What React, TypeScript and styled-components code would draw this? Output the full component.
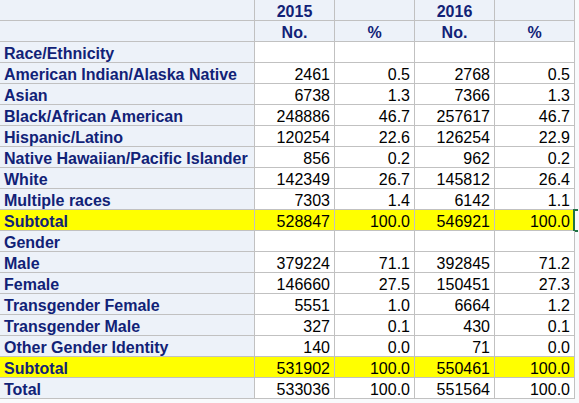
import React from "react";
import styled, { createGlobalStyle, css } from "styled-components";

const Global = createGlobalStyle`
  html, body { margin: 0; padding: 0; background: #f9fafc; }
  body { font-family: "Liberation Sans", Arial, sans-serif; }
`;

const Table = styled.table`
  border-collapse: separate;
  border-spacing: 0;
  table-layout: fixed;
  width: 575px;
  font-family: "Liberation Sans", Arial, sans-serif;
  font-size: 16px;
`;

const Col = styled.col<{ $w: number }>`
  width: ${(p) => p.$w}px;
`;

const Row = styled.tr<{ $hl?: boolean }>`
  height: 21px;
  ${(p) =>
    p.$hl &&
    css`
      & > td,
      & > th {
        background: #ffff00;
      }
    `}
`;

const cellBase = css`
  box-sizing: border-box;
  height: 21px;
  padding: 3px 4px 0 4px;
  border-right: 1px solid #c1c1c1;
  border-bottom: 1px solid #c1c1c1;
  line-height: 17px;
  white-space: nowrap;
  overflow: visible;
  vertical-align: top;
`;

const HeadCell = styled.th`
  ${cellBase};
  background: #edf2f9;
  color: #112277;
  font-weight: bold;
  text-align: center;
`;

const LabelCell = styled.th`
  ${cellBase};
  background: #edf2f9;
  color: #112277;
  font-weight: bold;
  text-align: left;
`;

const NumCell = styled.td<{ $mark?: boolean }>`
  ${cellBase};
  background: #ffffff;
  color: #000000;
  text-align: right;
  position: relative;
  ${(p) =>
    p.$mark &&
    css`
      &::after {
        content: "";
        position: absolute;
        right: -4px;
        top: -1px;
        width: 3px;
        height: 19px;
        border: 2px solid #217346;
        border-right: none;
      }
    `}
`;

type DataRow = {
  label: string;
  vals?: string[];
  hl?: boolean;
  mark?: boolean;
};

const rows: DataRow[] = [
  { label: "Race/Ethnicity" },
  { label: "American Indian/Alaska Native", vals: ["2461", "0.5", "2768", "0.5"] },
  { label: "Asian", vals: ["6738", "1.3", "7366", "1.3"] },
  { label: "Black/African American", vals: ["248886", "46.7", "257617", "46.7"] },
  { label: "Hispanic/Latino", vals: ["120254", "22.6", "126254", "22.9"] },
  { label: "Native Hawaiian/Pacific Islander", vals: ["856", "0.2", "962", "0.2"] },
  { label: "White", vals: ["142349", "26.7", "145812", "26.4"] },
  { label: "Multiple races", vals: ["7303", "1.4", "6142", "1.1"] },
  { label: "Subtotal", vals: ["528847", "100.0", "546921", "100.0"], hl: true, mark: true },
  { label: "Gender" },
  { label: "Male", vals: ["379224", "71.1", "392845", "71.2"] },
  { label: "Female", vals: ["146660", "27.5", "150451", "27.3"] },
  { label: "Transgender Female", vals: ["5551", "1.0", "6664", "1.2"] },
  { label: "Transgender Male", vals: ["327", "0.1", "430", "0.1"] },
  { label: "Other Gender Identity", vals: ["140", "0.0", "71", "0.0"] },
  { label: "Subtotal", vals: ["531902", "100.0", "550461", "100.0"], hl: true },
  { label: "Total", vals: ["533036", "100.0", "551564", "100.0"] },
];

export default function App() {
  return (
    <>
      <Global />
      <Table>
        <colgroup>
          <Col $w={255} />
          <Col $w={80} />
          <Col $w={80} />
          <Col $w={80} />
          <Col $w={80} />
        </colgroup>
        <thead>
          <Row>
            <HeadCell />
            <HeadCell>2015</HeadCell>
            <HeadCell />
            <HeadCell>2016</HeadCell>
            <HeadCell />
          </Row>
          <Row>
            <HeadCell />
            <HeadCell>No.</HeadCell>
            <HeadCell>%</HeadCell>
            <HeadCell>No.</HeadCell>
            <HeadCell>%</HeadCell>
          </Row>
        </thead>
        <tbody>
          {rows.map((r, i) => (
            <Row key={i} $hl={r.hl}>
              <LabelCell>{r.label}</LabelCell>
              {(r.vals ?? ["", "", "", ""]).map((v, j) => (
                <NumCell key={j} $mark={r.mark && j === 3}>
                  {v}
                </NumCell>
              ))}
            </Row>
          ))}
        </tbody>
      </Table>
    </>
  );
}
